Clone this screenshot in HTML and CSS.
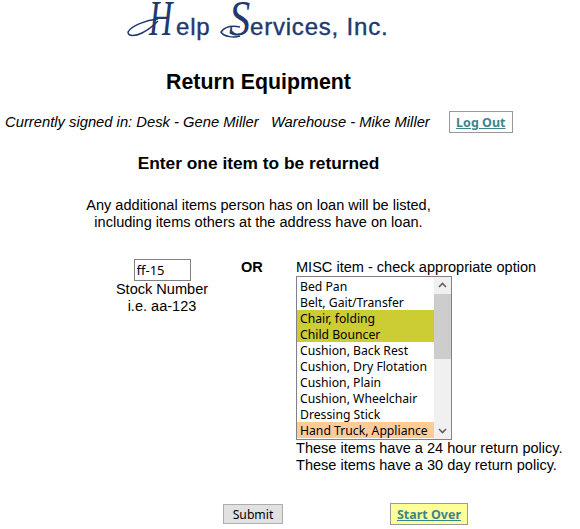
FILE: index.html
```html
<!DOCTYPE html>
<html lang="en">
  <head>
    <meta charset="UTF-8" />
    <title>Return Equipment</title>
    <link rel="stylesheet" href="styles.css">
  </head>
  <body>
    <div class="container">
      <div class="logo">
        <svg width="262" height="50" viewBox="0 0 262 50">
          <!-- flourishes on the script capitals -->
          <path class="swash" d="M30 19 C18 20 3 26 0 32 C0 37 8 36 14 33 C20 30 26 25 30 21" />
          <path class="swash" d="M112 27 C102 25 96 28 93 32 C96 37 106 38 112 36" />
          <text class="logo-cap" transform="translate(21 35) scale(0.65 1)">H</text>
          <text class="logo-word" x="48" y="35">elp</text>
          <text class="logo-cap" transform="translate(101 35) scale(0.85 1)">S</text>
          <text class="logo-word" x="122" y="35">ervices, Inc.</text>
        </svg>
      </div>

      <h1>Return Equipment</h1>

      <div class="signed-in">
        <i>Currently signed in: Desk - Gene Miller &nbsp; Warehouse - Mike Miller</i>
        <a class="link-button logout" href="#">Log Out</a>
      </div>

      <h2>Enter one item to be returned</h2>

      <p class="note">
        Any additional items person has on loan will be listed,<br />
        including items others at the address have on loan.
      </p>

      <div class="item-form">
        <div class="stock">
          <input class="stock-input" type="text" value="ff-15" />
          <div>Stock Number</div>
          <div>i.e. aa-123</div>
        </div>
        <div class="or">OR</div>
        <div class="misc">
          <div class="misc-title">MISC item - check appropriate option</div>
          <div class="listbox">
            <ul class="options">
              <li>Bed Pan</li>
              <li>Belt, Gait/Transfer</li>
              <li class="day">Chair, folding</li>
              <li class="day">Child Bouncer</li>
              <li>Cushion, Back Rest</li>
              <li>Cushion, Dry Flotation</li>
              <li>Cushion, Plain</li>
              <li>Cushion, Wheelchair</li>
              <li>Dressing Stick</li>
              <li class="month">Hand Truck, Appliance</li>
            </ul>
            <div class="scrollbar">
              <svg class="arrow" width="17" height="17" viewBox="0 0 17 17"><path d="M5 10 L8.5 6.5 L12 10" /></svg>
              <div class="track"><div class="thumb"></div></div>
              <svg class="arrow" width="17" height="17" viewBox="0 0 17 17"><path d="M5 7 L8.5 10.5 L12 7" /></svg>
            </div>
          </div>
          <div>These items have a 24 hour return policy.</div>
          <div>These items have a 30 day return policy.</div>
        </div>
      </div>

      <div class="actions">
        <button class="submit">Submit</button>
        <a class="link-button start-over" href="#">Start Over</a>
      </div>
    </div>
  </body>
</html>
```

FILE: styles.css
```css
body {
  font-family: "Liberation Sans", Arial, sans-serif;
  font-size: 14.55px;
  line-height: 17px;
  margin: 0;
  color: #000;
  background: #fff;
}
.container {
  width: 517px;
  text-align: center;
}

.logo {
  height: 50px;
}
.logo svg {
  display: block;
  margin: 0 auto;
  overflow: visible;
}
.swash {
  fill: none;
  stroke: #1f3a6e;
  stroke-width: 1.5;
}
.logo-cap {
  font-family: "Liberation Serif", serif;
  font-style: italic;
  font-size: 50px;
  fill: #1f3a6e;
}
.logo-word {
  font-family: "Liberation Sans", sans-serif;
  font-size: 24px;
  fill: #1f3a6e;
  stroke: #1f3a6e;
  stroke-width: 0.4;
  letter-spacing: 0.8px;
}

h1 {
  font-size: 21.33px;
  line-height: 25px;
  margin: 20px 0 0;
}
.signed-in {
  display: flex;
  align-items: center;
  margin-top: 16px;
  padding-left: 5px;
  font-size: 14.77px;
  white-space: nowrap;
}
.link-button {
  font-family: "Noto Sans", sans-serif;
  font-weight: bold;
  font-size: 12.5px;
  color: #3d858c;
  border: 1px solid #999;
  box-sizing: border-box;
  text-align: center;
}
.logout {
  width: 64px;
  height: 22px;
  line-height: 21px;
  margin-left: 19px;
}
h2 {
  font-size: 17.33px;
  line-height: 20px;
  margin: 20px 0 0;
}
.note {
  margin: 24px 0 0;
}

.item-form {
  display: flex;
  text-align: left;
  margin-top: 28px;
}
.stock {
  flex: none;
  width: 110px;
  margin-left: 107px;
  text-align: center;
}
.stock-input {
  display: block;
  box-sizing: border-box;
  width: 57px;
  height: 22px;
  margin: 0 auto;
  padding: 1px 2px;
  border: 1px solid #808080;
  font-family: "Noto Sans", sans-serif;
  font-size: 13px;
}
.or {
  flex: none;
  width: 55px;
  margin-left: 24px;
  font-weight: bold;
}
.misc {
  flex: none;
  width: 284px;
  white-space: nowrap;
}
.misc-title {
  height: 17px;
}
.listbox {
  display: flex;
  box-sizing: border-box;
  width: 156px;
  height: 164px;
  border: 1px solid #82828a;
  font-family: "Noto Sans", sans-serif;
  font-size: 12.2px;
}
.options {
  flex: 1;
  list-style: none;
  margin: 0;
  padding: 1px 0 0;
}
.options li {
  height: 16px;
  line-height: 18px;
  padding-left: 3px;
}
.options .day {
  background: #cccc33;
}
.options .month {
  background: #ffcc99;
}
.scrollbar {
  display: flex;
  flex-direction: column;
  width: 17px;
  background: #f0f0f0;
}
.arrow {
  flex: none;
}
.arrow path {
  fill: none;
  stroke: #606060;
  stroke-width: 1.6;
}
.track {
  flex: 1;
}
.thumb {
  height: 65px;
  background: #cdcdcd;
}

.actions {
  display: flex;
  align-items: center;
  margin-top: 29px;
}
.submit {
  box-sizing: border-box;
  width: 60px;
  height: 20px;
  margin-left: 223px;
  padding: 0;
  background: #e1e1e1;
  border: 1px solid #adadad;
  font-family: "Noto Sans", sans-serif;
  font-size: 12.2px;
}
.start-over {
  width: 78px;
  height: 22px;
  line-height: 21px;
  margin-left: 107px;
  background: #ffff99;
}
```
